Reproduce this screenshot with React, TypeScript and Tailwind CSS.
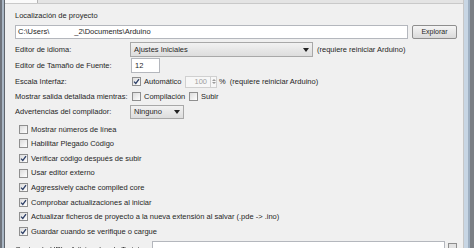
import React from "react";

const font = { fontFamily: '"Liberation Sans", Arial, sans-serif' };

function Check({ on }: { on?: boolean }) {
  return (
    <span className="w-[9px] h-[9px] shrink-0 border border-[#8f8f8f] bg-gradient-to-br from-[#dcdcdc] to-white flex items-center justify-center">
      {on && (
        <svg width="7" height="7" viewBox="0 0 7 7">
          <path d="M1 3.6 L2.8 5.4 L6 1.2" fill="none" stroke="#2c3e66" strokeWidth="1.3" />
        </svg>
      )}
    </span>
  );
}

function Caret() {
  return (
    <svg width="6" height="4" viewBox="0 0 6 4">
      <path d="M0 0 H6 L3 4 Z" fill="#222" />
    </svg>
  );
}

const options = [
  { label: "Mostrar números de línea", on: false },
  { label: "Habilitar Plegado Código", on: false },
  { label: "Verificar código después de subir", on: true },
  { label: "Usar editor externo", on: false },
  { label: "Aggressively cache compiled core", on: true },
  { label: "Comprobar actualizaciones al iniciar", on: true },
  { label: "Actualizar ficheros de proyecto a la nueva extensión al salvar (.pde -> .ino)", on: true },
  { label: "Guardar cuando se verifique o cargue", on: true },
];

export default function App() {
  return (
    <div className="w-[474px] h-[248px] overflow-hidden flex bg-[#f0f0f0] text-[7.5px] text-[#262626]" style={font}>
      {/* left window frame */}
      <div className="w-[5px] shrink-0 flex">
        <div className="w-[2px] bg-[#6f747c]" />
        <div className="w-[2px] bg-[#a9b6c4]" />
        <div className="w-[1px] bg-[#5f646b]" />
      </div>

      <div className="flex-1 flex flex-col min-w-0">
        {/* tab strip edge */}
        <div className="h-[4px] shrink-0 flex border-b border-[#c9c9c9]">
          <div className="w-[33px] bg-[#fafafa] border-r border-[#b5b5b5]" />
          <div className="flex-1 bg-[#e4e4e4]" />
        </div>

        <div className="flex flex-col pl-[10px] pr-[6px]">
          <div className="h-[13px] mt-[5px] flex items-center">Localización de proyecto</div>

          <div className="flex items-center gap-[4px] mt-[3px] h-[14px]">
            <div className="flex-1 h-[14px] bg-white border border-[#b4b7bd] flex items-center px-[2px] whitespace-pre">
              C:\Users\            _2\Documents\Arduino
            </div>
            <button className="w-[45px] h-[14px] rounded-[2px] border border-[#8e8e8e] bg-gradient-to-b from-[#f5f5f5] to-[#dadada] text-[7px] flex items-center justify-center">
              Explorar
            </button>
          </div>

          <div className="flex items-center h-[15px] mt-[3px]">
            <div className="w-[115px] shrink-0">Editor de idioma:</div>
            <div className="w-[183px] h-[15px] border border-[#a8a8a8] bg-gradient-to-b from-[#f2f2f2] to-[#dddddd] flex items-center justify-between px-[3px]">
              <span>Ajustes Iniciales</span>
              <Caret />
            </div>
            <span className="ml-[4px]">(requiere reiniciar Arduino)</span>
          </div>

          <div className="flex items-center h-[15px] mt-[1px]">
            <div className="w-[116px] shrink-0">Editor de Tamaño de Fuente:</div>
            <div className="w-[29px] h-[15px] bg-white border border-[#b4b7bd] flex items-center px-[3px]">12</div>
          </div>

          <div className="flex items-center h-[13px] mt-[2px]">
            <div className="w-[117px] shrink-0">Escala Interfaz:</div>
            <Check on />
            <span className="ml-[3px] w-[41px]">Automático</span>
            <div className="w-[32px] h-[12px] bg-[#f7f7f7] border border-[#d0d0d0] flex items-center justify-end text-[#a0a0a0]">
              <span className="mr-[3px]">100</span>
              <span className="w-[6px] h-full border-l border-[#d0d0d0] flex flex-col items-center justify-center gap-[1px]">
                <svg width="4" height="2" viewBox="0 0 4 2"><path d="M0 2 L2 0 L4 2Z" fill="#9a9a9a" /></svg>
                <svg width="4" height="2" viewBox="0 0 4 2"><path d="M0 0 L2 2 L4 0Z" fill="#9a9a9a" /></svg>
              </span>
            </div>
            <span className="ml-[2px]">% &nbsp;(requiere reiniciar Arduino)</span>
          </div>

          <div className="flex items-center h-[13px] mt-[2px]">
            <div className="w-[117px] shrink-0">Mostrar salida detallada mientras:</div>
            <Check />
            <span className="ml-[3px] w-[45px]">Compilación</span>
            <Check />
            <span className="ml-[3px]">Subir</span>
          </div>

          <div className="flex items-center h-[14px] mt-[2px]">
            <div className="w-[115px] shrink-0">Advertencias del compilador:</div>
            <div className="w-[54px] h-[14px] border border-[#a8a8a8] bg-gradient-to-b from-[#f2f2f2] to-[#dddddd] flex items-center justify-between px-[3px]">
              <span>Ninguno</span>
              <Caret />
            </div>
          </div>

          <div className="flex flex-col mt-[3px] pl-[4px]">
            {options.map((o) => (
              <div key={o.label} className="flex items-center h-[14.6px] whitespace-nowrap">
                <Check on={o.on} />
                <span className="ml-[3px]">{o.label}</span>
              </div>
            ))}
          </div>

          <div className="flex items-start h-[14px] mt-[2px] whitespace-nowrap">
            <div className="w-[137px] shrink-0 pt-[3px] blur-[0.4px]">Gestor de URLs Adicionales de Tarjetas:</div>
            <div className="w-[303px] h-[14px] bg-white border border-[#b4b7bd] px-[4px] pt-[3px] text-[#555] blur-[0.5px] overflow-hidden">
              http://arduino.esp8266.com/stable/package_esp8266com_index.json
            </div>
            <div className="ml-[3px] mt-[2px] w-[9px] h-[9px] border border-[#8e8e8e] bg-[#e2e2e2]" />
          </div>
        </div>
      </div>

      {/* right window frame */}
      <div className="w-[11px] shrink-0 flex">
        <div className="w-[1px] bg-[#c7c7c7]" />
        <div className="w-[4px] bg-[#c8d6e4]" />
        <div className="w-[2px] bg-[#9fb0c2]" />
        <div className="w-[4px] bg-[#7b7f85]" />
      </div>
    </div>
  );
}
